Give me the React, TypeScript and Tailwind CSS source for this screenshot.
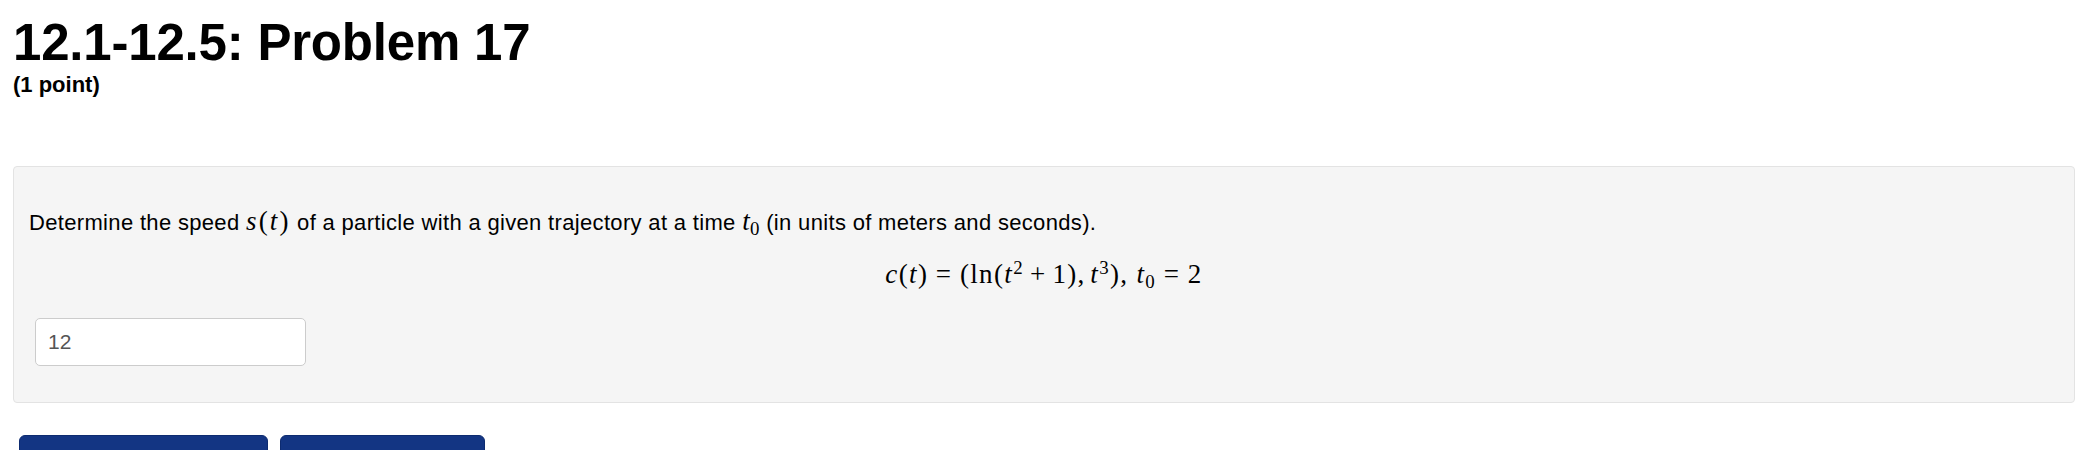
import React from "react";

const mathFont = "font-['Liberation_Serif','Times_New_Roman',serif]";

const V = ({ children }: { children: React.ReactNode }) => (
  <span className="italic">{children}</span>
);

const Op = ({ children }: { children: React.ReactNode }) => (
  <span className="mx-[0.22em]">{children}</span>
);

const Rel = ({ children }: { children: React.ReactNode }) => (
  <span className="mx-[0.28em]">{children}</span>
);

export default function App() {
  return (
    <div className="h-[450px] overflow-hidden bg-white text-black font-['Liberation_Sans',Arial,sans-serif]">
      {/* Title */}
      <div className="pl-[13px] pt-[17px]">
        <h1 className="text-[51px] leading-none font-bold tracking-[-0.004em]">12.1-12.5: Problem 17</h1>
        <div className="mt-[6px] text-[22px] leading-none font-bold">(1 point)</div>
      </div>

      {/* Problem body */}
      <div className="mt-[70px] ml-[13px] w-[2062px] rounded-[4px] border border-[#e3e3e3] bg-[#f5f5f5] pt-[39px] pb-[36px] pl-[15px]">
        <p className="text-[22px] leading-[30px] tracking-[0.015em]">
          Determine the speed{" "}
          <span className={`${mathFont} text-[27px] tracking-[0.08em]`}>
            <V>s</V>(<V>t</V>)
          </span>{" "}
          of a particle with a given trajectory at a time{" "}
          <span className={`${mathFont} text-[27px]`}>
            <V>t</V>
            <sub className="text-[0.7em]">0</sub>
          </span>{" "}
          (in units of meters and seconds).
        </p>

        <div className={`${mathFont} mt-[18px] pr-[15px] text-center text-[27px] leading-[36px] tracking-[0.05em]`}>
          <V>c</V>(<V>t</V>)<Rel>=</Rel>(ln(<V>t</V>
          <sup className="text-[0.7em]">2</sup>
          <Op>+</Op>1),<span className="ml-[0.17em]" />
          <V>t</V>
          <sup className="text-[0.7em]">3</sup>),{" "}
          <V>t</V>
          <sub className="text-[0.7em]">0</sub>
          <Rel>=</Rel>2
        </div>

        <input
          type="text"
          defaultValue="12"
          className="mt-[26px] ml-[6px] block h-[48px] w-[271px] rounded-[5px] border border-[#cccccc] bg-white px-[12px] text-[21px] text-[#555555] outline-none"
        />
      </div>

      {/* Buttons (labels fall below the visible area) */}
      <div className="mt-[32px] ml-[19px] flex gap-[12px]">
        <button
          aria-label="Preview My Answers"
          className="h-[50px] w-[249px] rounded-[6px] border border-[#0d2b70] bg-[#133583]"
        />
        <button
          aria-label="Submit Answers"
          className="h-[50px] w-[205px] rounded-[6px] border border-[#0d2b70] bg-[#133583]"
        />
      </div>
    </div>
  );
}
